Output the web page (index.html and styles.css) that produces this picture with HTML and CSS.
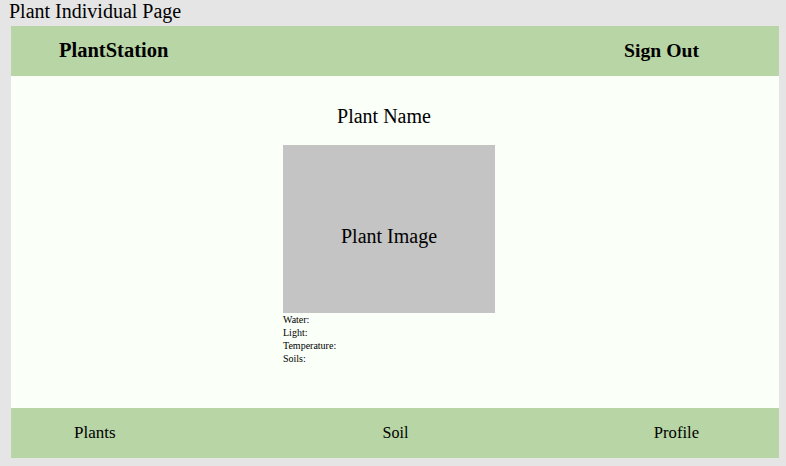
FILE: index.html
```html
<!DOCTYPE html>
<html lang="en">
<head>
<meta charset="utf-8">
<title>Plant Individual Page</title>
<link rel="stylesheet" href="styles.css">
</head>
<body>
<div class="frame-title">Plant Individual Page</div>
<div class="frame">
  <header class="topbar">
    <div class="brand">PlantStation</div>
    <div class="signout">Sign Out</div>
  </header>
  <main class="content">
    <h1 class="plant-name">Plant Name</h1>
    <div class="plant-col">
      <div class="plant-image">Plant Image</div>
      <ul class="facts">
        <li>Water:</li>
        <li>Light:</li>
        <li>Temperature:</li>
        <li>Soils:</li>
      </ul>
    </div>
  </main>
  <footer class="bottombar">
    <div class="plants">Plants</div>
    <div class="soil">Soil</div>
    <div class="profile">Profile</div>
  </footer>
</div>
</body>
</html>
```
FILE: styles.css
```css
* { box-sizing: border-box; }
html, body { margin: 0; padding: 0; }
body {
  width: 786px;
  height: 466px;
  overflow: hidden;
  background: #e5e5e5;
  font-family: "Liberation Serif", serif;
  color: #000;
  display: flex;
  flex-direction: column;
}
.frame-title {
  height: 26px;
  padding: 1px 0 0 9px;
  font-size: 20px;
  line-height: 20px;
}
.frame {
  margin: 0 7px 0 11px;
  height: 432px;
  display: flex;
  flex-direction: column;
  background: #faFff7;
}
.topbar {
  height: 50px;
  padding-bottom: 2px;
  background: #b8d5a5;
  display: flex;
  align-items: center;
  font-size: 20.5px;
  font-weight: 700;
}
.brand { margin-left: 48px; }
.signout { margin-left: auto; margin-right: 80px; font-size: 19.7px; }
.content {
  flex: 1;
  display: flex;
  flex-direction: column;
  padding-top: 28px;
}
.plant-name {
  margin: 0;
  height: 41px;
  font-size: 20px;
  line-height: 24px;
  font-weight: 400;
  text-align: center;
  padding-right: 22px;
}
.plant-col { margin-left: 272px; width: 212px; }
.plant-image {
  height: 168px;
  padding-top: 14px;
  background: #c4c4c4;
  display: flex;
  align-items: center;
  justify-content: center;
  font-size: 20px;
}
.facts {
  list-style: none;
  margin: 0;
  padding: 0;
  font-size: 10px;
  line-height: 13px;
}
.bottombar {
  height: 50px;
  background: #b8d5a5;
  display: flex;
  align-items: center;
  font-size: 17px;
}
.plants { margin-left: 63px; }
.soil { margin-left: 267px; font-size: 16px; }
.profile { margin-left: auto; margin-right: 80px; font-size: 16.6px; }
```
